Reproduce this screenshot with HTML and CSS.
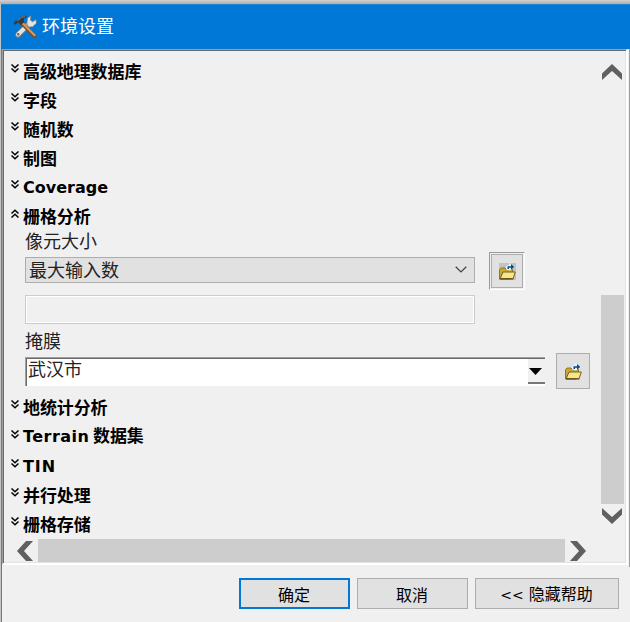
FILE: index.html
```html
<!DOCTYPE html>
<html lang="zh-CN">
<head>
<meta charset="utf-8">
<title>环境设置</title>
<link rel="stylesheet" href="styles.css">
</head>
<body>
<svg class="defs" aria-hidden="true">
  <symbol id="more" viewBox="0 0 8 9"><path d="M.5.5 4 3.8 7.5.5M.5 4.5 4 7.8 7.5 4.5"/></symbol>
  <symbol id="less" viewBox="0 0 8 9"><path d="M.5 4.5 4 1.2 7.5 4.5M.5 8.5 4 5.2 7.5 8.5"/></symbol>
  <symbol id="folder" viewBox="0 0 17 17">
    <path d="M.5 6.5 2 5h4l1 1.5h6.5V9L11 16H.5z" fill="#c9a637" stroke="#967417"/>
    <path d="M4 9h12.3l-2.2 6.6H1.2z" fill="#f7e68b" stroke="#77601f"/>
    <path d="M1 16h13.4" stroke="#59440e"/>
    <path d="M7 6.5V3l3-.8V0l6 4-5 3.5z" fill="#e8f4fc"/>
    <path d="M8.5 6V3.3H12V1l3.3 2.9L12 6.7V4.8h-2V6z" fill="#064a91"/>
  </symbol>
</svg>
<div class="window">
  <header class="titlebar">
    <svg class="tools" viewBox="0 0 24 24">
      <path d="M5 20 15.5 9.5" stroke="#777" stroke-width="6" stroke-linecap="round"/>
      <path d="M5 19.5 16 9" stroke="#e3e3e3" stroke-width="4" stroke-linecap="round"/>
      <path d="M14 8.5 14.5 3 18 .8 17.3 5l2.2 1.8L23 4.6l.4 3.6-3.8 3.6-4.4.3z" fill="#e0e4e7" stroke="#747c82" stroke-width=".7"/>
      <circle cx="5.2" cy="19.2" r="1.2" fill="#666"/>
      <path d="m9 8 12.5 13.2" stroke="#7c4d28" stroke-width="4" stroke-linecap="round"/>
      <path d="m9.6 8 12 12.3" stroke="#d79a60" stroke-width="2.2" stroke-linecap="round"/>
      <path d="M.5 8.5 2.2 5.8 5 5 8 1.5 12.8.8 14 2.2 10.8 3.7 11 7.5 7.7 10 5.2 7.3 2.7 9.7z" fill="#383a3c"/>
      <path d="M4.5 5.8 8.5 2.2 12 1.7" fill="none" stroke="#85898c"/>
    </svg>
    <h1>环境设置</h1>
  </header>
  <main class="panel">
    <div class="content">
      <div class="row"><svg><use href="#more"/></svg><span>高级地理数据库</span></div>
      <div class="row"><svg><use href="#more"/></svg><span>字段</span></div>
      <div class="row"><svg><use href="#more"/></svg><span>随机数</span></div>
      <div class="row"><svg><use href="#more"/></svg><span>制图</span></div>
      <div class="row"><svg><use href="#more"/></svg><span class="latin">Coverage</span></div>
      <div class="row"><svg><use href="#less"/></svg><span>栅格分析</span></div>
      <section class="form">
        <label class="first">像元大小</label>
        <div class="line cell-size">
          <div class="select"><span>最大输入数</span><svg viewBox="0 0 12 7"><path d="m.7.7 5.3 5.2L11.3.7"/></svg></div>
          <div class="focus"><button class="browse"><svg class="selected"><use href="#folder"/></svg></button></div>
        </div>
        <div class="disabled"></div>
        <label class="second">掩膜</label>
        <div class="line mask">
          <div class="combo"><span>武汉市</span><div class="drop"><svg viewBox="0 0 13 7"><path d="M0 0h13L6.5 7z"/></svg></div></div>
          <button class="browse"><svg><use href="#folder"/></svg></button>
        </div>
      </section>
      <div class="row"><svg><use href="#more"/></svg><span>地统计分析</span></div>
      <div class="row terrain"><svg><use href="#more"/></svg><span><b class="latin">Terrain</b> 数据集</span></div>
      <div class="row"><svg><use href="#more"/></svg><span class="latin tin">TIN</span></div>
      <div class="row"><svg><use href="#more"/></svg><span>并行处理</span></div>
      <div class="row"><svg><use href="#more"/></svg><span>栅格存储</span></div>
    </div>
    <div class="vscroll">
      <svg class="up" viewBox="0 0 20 16"><path d="M0 9.5 10 0l10 9.5V16L10 7 0 16z"/></svg>
      <div class="vthumb"></div>
      <svg class="down" viewBox="0 0 20 16"><path d="M0 0l10 9L20 0v6.5L10 16 0 6.5z"/></svg>
    </div>
    <div class="hscroll">
      <svg viewBox="0 0 16 20"><path d="M9 0h7L7 10l9 10H9L0 10z"/></svg>
      <div class="hthumb"></div>
      <svg viewBox="0 0 16 20"><path d="M0 0h7l9 10-9 10H0l9-10z"/></svg>
    </div>
  </main>
  <footer>
    <button class="primary">确定</button>
    <button>取消</button>
    <button class="help"><span class="arrows">&lt;&lt;</span>隐藏帮助</button>
  </footer>
</div>
</body>
</html>
```
FILE: styles.css
```css
* { box-sizing: border-box; }
body {
  width: 630px;
  height: 622px;
  margin: 0;
  overflow: hidden;
  padding: 4px 0 0 1px;
  background: linear-gradient(#d2d2d2, #acacac 4px, #c4c4c4 4px);
  font-family: "DejaVu Sans", "Noto Sans CJK SC", sans-serif;
  color: #000;
}
.defs { position: absolute; width: 0; height: 0; }
svg { display: block; flex: none; }
.window { height: 618px; background: #f0f0f0; border-left: 1px solid #338bce; }
.titlebar {
  height: 45px;
  margin-left: -1px;
  padding-left: 12px;
  display: flex;
  align-items: center;
  background: #0078d7;
  border-top: 1px solid #2684ca;
}
.tools { width: 24px; height: 24px; margin-top: -1px; }
h1 {
  margin: -4px 0 0 5px;
  font: 400 18px/24px "Noto Sans CJK SC", sans-serif;
  color: #fff;
}
.panel {
  width: 626px;
  height: 516px;
  padding: 1px 0 0 1px;
  display: grid;
  grid-template-columns: 597px 23px;
  grid-template-rows: 488px 24px;
  border-top: 1px solid #a0a0a0;
  border-left: 1px solid #a0a0a0;
  border-right: 2px solid #fff;
  border-bottom: 2px solid #fff;
  box-shadow: inset 1px 1px #696969, inset -1px -1px #e3e3e3;
}
.content { padding-top: 5px; }
.row {
  height: 29px;
  padding-left: 7px;
  display: flex;
  align-items: center;
  font: bold 17px/29px "Noto Sans CJK SC", sans-serif;
  letter-spacing: -.1px;
  white-space: pre;
}
.row span { margin-top: -1px; }
.row svg {
  width: 8px;
  height: 9px;
  margin: -4px 4px 0 0;
  fill: none;
  stroke: #000;
  stroke-width: 1.5;
}
.row .latin { font: bold 16px/29px "DejaVu Sans", sans-serif; letter-spacing: 0; }
.row > .latin { padding-top: 3px; }
.row.terrain .latin { letter-spacing: .45px; }
.row .tin { letter-spacing: .9px; }
.terrain { height: 30px; }
.form { height: 162px; padding-left: 21px; color: #222; }
label { display: block; font: 400 18px/24px "Noto Sans CJK SC", sans-serif; }
.first { height: 21px; line-height: 21px; }
.line { display: flex; }
.cell-size { height: 44px; align-items: flex-start; }
.select {
  width: 450px;
  height: 26px;
  margin-top: 6px;
  padding: 0 7px 2px 3px;
  display: flex;
  align-items: center;
  justify-content: space-between;
  border: 1px solid #adadad;
  background: #e1e1e1;
  font: 400 18px/22px "Noto Sans CJK SC", sans-serif;
}
.select span { margin-top: -1px; }
.select svg { width: 12px; height: 7px; fill: none; stroke: #444; stroke-width: 1.3; }
.focus {
  width: 36px;
  height: 38px;
  margin: 1px 0 0 14px;
  padding: 1px 0 0 1px;
  border: 1px solid #fff;
  border-top-color: #999;
  border-left-color: #999;
}
button {
  margin: 0;
  padding: 0;
  border: 1px solid #adadad;
  background: #e1e1e1;
  color: #000;
  font: 400 16px/24px "Noto Sans CJK SC", sans-serif;
}
.browse {
  width: 34px;
  height: 36px;
  display: flex;
  align-items: center;
  justify-content: center;
}
.focus .browse { width: 32px; height: 34px; }
.browse svg { width: 17px; height: 17px; }
.selected { background: #c3c3c3; }
.disabled {
  width: 450px;
  height: 29px;
  border: 1px solid #ccc;
  box-shadow: inset 0 0 0 1px #fff;
}
.second { height: 29px; padding-top: 4px; }
.mask { height: 36px; }
.combo {
  width: 520px;
  height: 29px;
  margin: 4px 11px 0 0;
  padding: 1px 0 0 1px;
  display: flex;
  justify-content: space-between;
  background: #fff;
  border-top: 1px solid #a0a0a0;
  border-left: 1px solid #a0a0a0;
  box-shadow: inset 1px 1px #696969;
  font: 400 18px/19px "Noto Sans CJK SC", sans-serif;
}
.combo span { padding-left: 1px; }
.drop {
  width: 17px;
  height: 25px;
  padding: 2px 2px 0 0;
  display: flex;
  align-items: center;
  justify-content: center;
  background: #f0f0f0;
  border-bottom: 2px solid #777;
}
.drop svg { width: 13px; height: 7px; }
.vscroll {
  display: flex;
  flex-direction: column;
  align-items: flex-start;
  fill: #606060;
}
.up, .down { width: 20px; height: 16px; margin-left: 1px; }
.up { margin-top: 13px; }
.vthumb { width: 23px; height: 209px; margin: 215px 0 4px; background: #cdcdcd; }
.hscroll {
  height: 23px;
  padding-left: 13px;
  display: flex;
  align-items: center;
  fill: #606060;
}
.hscroll svg { width: 16px; height: 20px; }
.hthumb { flex: none; width: 527px; height: 23px; margin: 0 5px; background: #cdcdcd; }
.window { background: linear-gradient(#a0a0a0, #a0a0a0) 627px 45px / 1px 518px no-repeat #f0f0f0; }
footer {
  display: flex;
  gap: 7px;
  padding: 13px 0 0 237px;
}
footer button { flex: none; width: 111px; height: 31px; padding: 0 1px 0 0; }
footer .primary { border: 2px solid #0078d7; }
footer .help { width: 144px; }
.arrows { margin-right: 5px; font: 14px/24px "DejaVu Sans", sans-serif; }
```
